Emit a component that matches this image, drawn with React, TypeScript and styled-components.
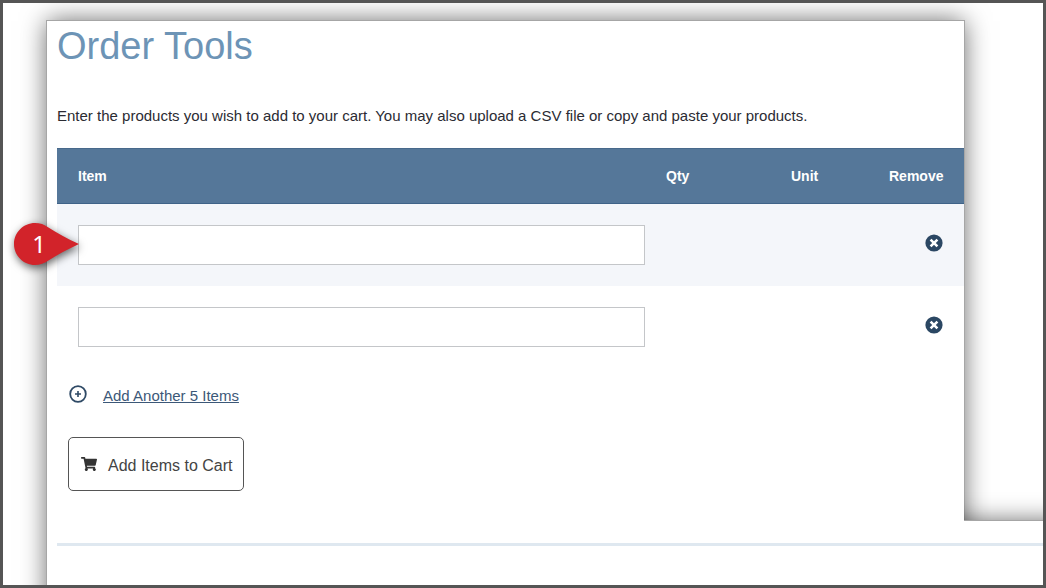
import React from "react";
import styled, { createGlobalStyle } from "styled-components";
import { FaShoppingCart } from "react-icons/fa";

const GlobalStyle = createGlobalStyle`
  * { box-sizing: border-box; }
  body {
    margin: 0;
    background: #fff;
    color: #2b2b33;
    font-family: "Liberation Sans", Arial, sans-serif;
    font-size: 15px;
    line-height: 20px;
  }
`;

const Frame = styled.div`
  display: flex;
  min-height: 100vh;
  padding: 18px 0 0 44px;
  border: 3px solid #555;
  overflow: hidden;
`;

const Sheet = styled.main`
  position: relative;
  isolation: isolate;
  flex: 1;
  display: flex;
  flex-direction: column;
`;

const Panel = styled.section`
  position: relative;
  padding-left: 10px;
  background: #fff;

  &::before {
    content: "";
    position: absolute;
    inset: 0;
    z-index: -1;
    box-shadow: 0 0 0 1px #a6a6a6, 0 0 24px rgba(0, 0, 0, 0.6);
  }
`;

/* The shadow runs on behind the footer, so the left edge has no seam. */
const ToolsPanel = styled(Panel)`
  margin-right: 79px;
  padding-top: 3px;
  padding-bottom: 30px;

  &::before { bottom: -100vh; }
`;

const FooterPanel = styled(Panel)`
  flex: 1;
  padding-top: 22px;

  &::before {
    left: 40px;
    right: -40px;
  }
`;

const Divider = styled.hr`
  height: 3px;
  margin: 0;
  border: 0;
  background: #dfe8f0;
`;

const Title = styled.h1`
  margin: 0 0 38px;
  color: #6d94b6;
  font-size: 38px;
  font-weight: 400;
  line-height: 44px;
`;

const Intro = styled.p`
  margin: 0 0 22px;
`;

const ItemsTable = styled.table`
  width: 100%;
  table-layout: fixed;
  border-collapse: collapse;
`;

const HeadCell = styled.th<{ $width?: number }>`
  width: ${({ $width }) => ($width ? `${$width}px` : "auto")};
  height: 56px;
  padding: 0 0 0 21px;
  background: #557799;
  box-shadow: inset 0 1px #48698b, inset 0 -1px #3f6388;
  color: #fff;
  font-size: 14px;
  text-align: left;
`;

const Row = styled.tr`
  &:nth-child(odd) { background: #f4f6fa; }
`;

const Cell = styled.td`
  height: 82px;
  padding: 0 0 0 21px;
`;

const RemoveCell = styled(Cell)`
  padding: 0 21px 6px 0;
  text-align: right;
`;

const Field = styled.div`
  position: relative;
`;

const ItemInput = styled.input`
  display: block;
  width: 100%;
  height: 40px;
  padding: 0 12px;
  border: 1px solid #c4c6c9;
  border-radius: 0;
  background: #fff;
  font: inherit;
`;

const IconButton = styled.button`
  display: inline-block;
  padding: 0;
  border: 0;
  background: none;
  vertical-align: middle;
  line-height: 0;
  cursor: pointer;
`;

const Marker = styled.div`
  position: absolute;
  top: -3px;
  right: 100%;
  width: 66px;
  height: 44px;
  margin-right: -1px;
  color: #fff;
  font: 24px/44px "Noto Sans", sans-serif;
  text-align: center;

  svg {
    position: absolute;
    inset: 0;
    overflow: visible;
    filter: drop-shadow(1px 3px 4px rgba(0, 0, 0, 0.6));
  }

  span {
    position: relative;
    display: block;
    width: 52px;
  }
`;

const AddRow = styled.div`
  display: flex;
  align-items: center;
  gap: 16px;
  margin: 17px 0 30px 12px;

  svg { margin-bottom: 4px; }
`;

const AddLink = styled.a`
  color: #3c5878;
  text-decoration: underline;
`;

const CartButton = styled.button`
  display: flex;
  align-items: center;
  gap: 11px;
  height: 54px;
  margin-left: 11px;
  padding: 4px 10px 0 12px;
  border: 1px solid #555;
  border-radius: 5px;
  background: #fff;
  color: #444;
  font: 16px/20px "Liberation Sans", Arial, sans-serif;
  cursor: pointer;

  svg { margin-top: -4px; color: #333; }
`;

const RemoveIcon = () => (
  <svg width="18" height="18" viewBox="0 0 18 18" aria-hidden="true">
    <circle cx="9" cy="9" r="8.6" fill="#2b4763" />
    <path d="M5.600 5.600l6.800 6.800M12.400 5.600l-6.800 6.800" stroke="#fff" strokeWidth="2.600" />
  </svg>
);

const PlusIcon = () => (
  <svg width="18" height="18" viewBox="0 0 18 18" fill="none" stroke="#2f4a66" aria-hidden="true">
    <circle cx="9" cy="9" r="7.8" strokeWidth="1.8" />
    <path d="M9 6v6M6 9h6" strokeWidth="1.6" />
  </svg>
);

const StepMarker = ({ step }: { step: number }) => (
  <Marker>
    <svg width="66" height="44" viewBox="0 0 66 44" aria-hidden="true">
      <path d="M22 1C10.400 1 1 10.400 1 22s9.400 21 21 21c5 0 9.500-1.600 13-4.200C44 33 54 27.500 66 22 54 16.500 44 11 35 5.200 31.500 2.600 27 1 22 1z" fill="#d2232a" />
    </svg>
    <span>{step}</span>
  </Marker>
);

const items = [1, 2];

export default function App() {
  return (
    <>
      <GlobalStyle />
      <Frame>
        <Sheet>
          <ToolsPanel>
            <Title>Order Tools</Title>
            <Intro>
              Enter the products you wish to add to your cart. You may also upload a CSV file or copy and paste your products.
            </Intro>
            <ItemsTable>
              <thead>
                <tr>
                  <HeadCell>Item</HeadCell>
                  <HeadCell $width={125}>Qty</HeadCell>
                  <HeadCell $width={98}>Unit</HeadCell>
                  <HeadCell $width={96}>Remove</HeadCell>
                </tr>
              </thead>
              <tbody>
                {items.map((item) => (
                  <Row key={item}>
                    <Cell>
                      <Field>
                        <ItemInput type="text" aria-label={`Item ${item}`} />
                        {item === 1 && <StepMarker step={1} />}
                      </Field>
                    </Cell>
                    <Cell />
                    <Cell />
                    <RemoveCell>
                      <IconButton type="button" aria-label={`Remove item ${item}`}>
                        <RemoveIcon />
                      </IconButton>
                    </RemoveCell>
                  </Row>
                ))}
              </tbody>
            </ItemsTable>
            <AddRow>
              <PlusIcon />
              <AddLink href="#add">Add Another 5 Items</AddLink>
            </AddRow>
            <CartButton type="button">
              <FaShoppingCart size={16} aria-hidden="true" />
              Add Items to Cart
            </CartButton>
          </ToolsPanel>
          <FooterPanel>
            <Divider />
          </FooterPanel>
        </Sheet>
      </Frame>
    </>
  );
}
